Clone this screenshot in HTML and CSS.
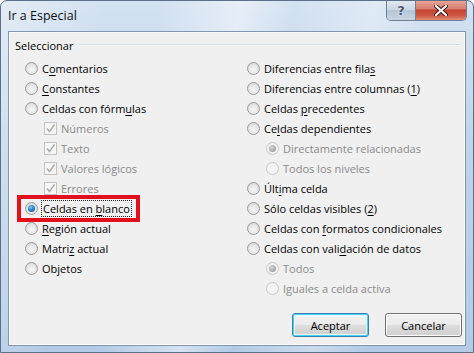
FILE: index.html
```html
<!DOCTYPE html>
<html lang="es">
<head>
    <meta charset="UTF-8">
    <title>Ir a Especial</title>
    <link rel="stylesheet" href="styles.css">
</head>
<body>
    <div class="window">
        <!-- barra de título -->
        <div class="titlebar">
            <div class="title">Ir a Especial</div>
            <div class="caption-btns">
                <div class="cap-btn help">?</div>
                <div class="cap-btn close">
                    <svg width="14" height="11" viewBox="0 0 14 11">
                        <path d="M2 1 L12 10 M12 1 L2 10" stroke="#3b1a16" stroke-width="4" stroke-linecap="round"/>
                        <path d="M2 1 L12 10 M12 1 L2 10" stroke="#fff" stroke-width="2.2" stroke-linecap="round"/>
                    </svg>
                </div>
            </div>
        </div>

        <!-- área cliente -->
        <div class="client">
            <div class="legend">
                <span>Seleccionar</span>
                <div class="legend-line"></div>
            </div>

            <div class="options">
                <div class="col">
                    <div class="row"><span class="radio"></span><span>C<u>o</u>mentarios</span></div>
                    <div class="row"><span class="radio"></span><span><u>C</u>onstantes</span></div>
                    <div class="row"><span class="radio"></span><span>Celdas con fórm<u>u</u>las</span></div>
                    <div class="row sub disabled"><span class="check"><svg width="11" height="11" viewBox="0 0 11 11"><path d="M2 5.5 L4.5 8.5 L9.5 1.5" fill="none" stroke="#a9a9a9" stroke-width="1.4"/></svg></span><span>Números</span></div>
                    <div class="row sub disabled"><span class="check"><svg width="11" height="11" viewBox="0 0 11 11"><path d="M2 5.5 L4.5 8.5 L9.5 1.5" fill="none" stroke="#a9a9a9" stroke-width="1.4"/></svg></span><span>Texto</span></div>
                    <div class="row sub disabled"><span class="check"><svg width="11" height="11" viewBox="0 0 11 11"><path d="M2 5.5 L4.5 8.5 L9.5 1.5" fill="none" stroke="#a9a9a9" stroke-width="1.4"/></svg></span><span>Valores lógicos</span></div>
                    <div class="row sub disabled"><span class="check"><svg width="11" height="11" viewBox="0 0 11 11"><path d="M2 5.5 L4.5 8.5 L9.5 1.5" fill="none" stroke="#a9a9a9" stroke-width="1.4"/></svg></span><span>Errores</span></div>
                    <div class="row">
                        <span class="radio on"></span><span class="focus">Celdas en <u>b</u>lanco</span>
                        <div class="red-box"></div>
                    </div>
                    <div class="row"><span class="radio"></span><span><u>R</u>egión actual</span></div>
                    <div class="row"><span class="radio"></span><span>Matri<u>z</u> actual</span></div>
                    <div class="row"><span class="radio"></span><span>Ob<u>j</u>etos</span></div>
                </div>
                <div class="col">
                    <div class="row"><span class="radio"></span><span>Diferencias entre fila<u>s</u></span></div>
                    <div class="row"><span class="radio"></span><span>Diferencias entre columnas (<u>1</u>)</span></div>
                    <div class="row"><span class="radio"></span><span>Celdas <u>p</u>recedentes</span></div>
                    <div class="row"><span class="radio"></span><span>Ce<u>l</u>das dependientes</span></div>
                    <div class="row sub disabled"><span class="radio on"></span><span>Directamente relacionadas</span></div>
                    <div class="row sub disabled"><span class="radio"></span><span>Todos los niveles</span></div>
                    <div class="row"><span class="radio"></span><span>Últ<u>i</u>ma celda</span></div>
                    <div class="row"><span class="radio"></span><span>Sólo celdas visibles (<u>2</u>)</span></div>
                    <div class="row"><span class="radio"></span><span>Celdas con <u>f</u>ormatos condicionales</span></div>
                    <div class="row"><span class="radio"></span><span>Celdas con vali<u>d</u>ación de datos</span></div>
                    <div class="row sub disabled"><span class="radio on"></span><span>Todos</span></div>
                    <div class="row sub disabled"><span class="radio"></span><span>Iguales a celda activa</span></div>
                </div>
            </div>

            <div class="buttons">
                <button class="btn default">Aceptar</button>
                <button class="btn">Cancelar</button>
            </div>
        </div>
    </div>
</body>
</html>
```

FILE: styles.css
```css
* {
    box-sizing: border-box;
    margin: 0;
    padding: 0;
}

body {
    background: #fff;
    font-family: 'Open Sans', 'Noto Sans', sans-serif;
    font-size: 11px;
    color: #000;
}

.window {
    width: 474px;
    height: 353px;
    border-radius: 7px 7px 0 0;
    border: 1px solid #5d7088;
    background:
        linear-gradient(100deg, rgba(255,255,255,0.35) 0%, rgba(255,255,255,0) 20%, rgba(255,255,255,0) 30%, rgba(255,255,255,0.45) 45%, rgba(255,255,255,0) 55%, rgba(255,255,255,0.3) 70%, rgba(255,255,255,0) 80%),
        linear-gradient(180deg, #d3e2f2 0%, #bfd4eb 40%, #b3cbe6 100%);
    overflow: hidden;
}

/* barra de título */
.titlebar {
    height: 30px;
    display: flex;
    align-items: flex-start;
}

.title {
    padding: 6px 0 0 7px;
    font-size: 12.5px;
    color: #111;
}

.caption-btns {
    margin-left: auto;
    margin-right: 6px;
    margin-top: -1px;
    display: flex;
    border: 1px solid #6f7f92;
    border-top: none;
    border-radius: 0 0 5px 5px;
    overflow: hidden;
    height: 21px;
}

.cap-btn {
    height: 100%;
    display: flex;
    align-items: center;
    justify-content: center;
}

.help {
    width: 29px;
    background: linear-gradient(180deg, #e3ebf3 0%, #c9d6e3 50%, #b5c5d6 51%, #c8d5e2 100%);
    border-right: 1px solid #6f7f92;
    color: #4b5a6b;
    font-family: 'DejaVu Sans', sans-serif;
    font-weight: bold;
    font-size: 13px;
    text-shadow: 0 0 2px #fff;
}

.close {
    width: 50px;
    background: linear-gradient(180deg, #e9a99c 0%, #d77c6c 45%, #c4412f 50%, #cf5b45 80%, #e2907c 100%);
}

/* área cliente */
.client {
    margin: 0 7px;
    height: 315px;
    border: 1px solid #8396ad;
    box-shadow: inset 0 0 0 1px #fbfcfd;
    background: #f0f0f0;
    padding: 5px 2px 0 6px;
}

.legend {
    height: 16px;
    display: flex;
    align-items: center;
    gap: 6px;
    padding-right: 3px;
}

.legend-line {
    flex: 1;
    height: 2px;
    border-top: 1px solid #d5dfe5;
    border-bottom: 1px solid #fff;
}

.options {
    margin-top: 5px;
    display: grid;
    grid-template-columns: 222px 1fr;
    padding-left: 10px;
}

.row {
    height: 20px;
    display: flex;
    align-items: center;
    gap: 4px;
    white-space: nowrap;
    position: relative;
}

.row.sub {
    padding-left: 19px;
}

.disabled {
    color: #8a8a8a;
}

u {
    text-decoration-thickness: 1px;
    text-underline-offset: 2px;
}

/* botones de opción */
.radio {
    width: 13px;
    height: 13px;
    border-radius: 50%;
    border: 1px solid #9a9a9a;
    background: radial-gradient(circle at 50% 60%, #f7f7f7 0%, #e4e4e4 55%, #cfcfcf 100%);
    flex-shrink: 0;
    position: relative;
}

.disabled .radio {
    border-color: #c6c6c6;
    background: #f4f4f4;
}

.radio.on::after {
    content: '';
    position: absolute;
    left: 2px;
    top: 2px;
    width: 7px;
    height: 7px;
    border-radius: 50%;
    background: radial-gradient(circle at 40% 35%, #8fd0f5 0%, #2a8ad0 40%, #0c4b8c 100%);
}

.disabled .radio.on::after {
    background: radial-gradient(circle at 40% 35%, #d8d8d8 0%, #a9a9a9 60%, #999 100%);
}

/* casillas */
.check {
    width: 13px;
    height: 13px;
    border: 1px solid #c2c2c2;
    background: #f6f6f6;
    display: flex;
    align-items: center;
    justify-content: center;
    flex-shrink: 0;
}

.focus {
    outline: 1px dotted #222;
    padding: 0 1px;
}

.red-box {
    position: absolute;
    left: -8px;
    top: -3px;
    width: 123px;
    height: 27px;
    border: 4px solid #e2101c;
}

/* botones */
.buttons {
    margin-top: 15px;
    display: flex;
    justify-content: flex-end;
    gap: 16px;
    padding-right: 1px;
}

.btn {
    width: 77px;
    height: 24px;
    border: 1px solid #707070;
    border-radius: 3px;
    background: linear-gradient(180deg, #f2f2f2 0%, #ebebeb 50%, #dddddd 51%, #cfcfcf 100%);
    font-family: inherit;
    font-size: 11px;
    color: #000;
    box-shadow: inset 0 0 0 1px #fcfcfc;
}

.btn.default {
    border-color: #3c7fb1;
    box-shadow: inset 0 0 0 1px #48d0f7, inset 0 0 0 2px #e6f6fd;
}
```
